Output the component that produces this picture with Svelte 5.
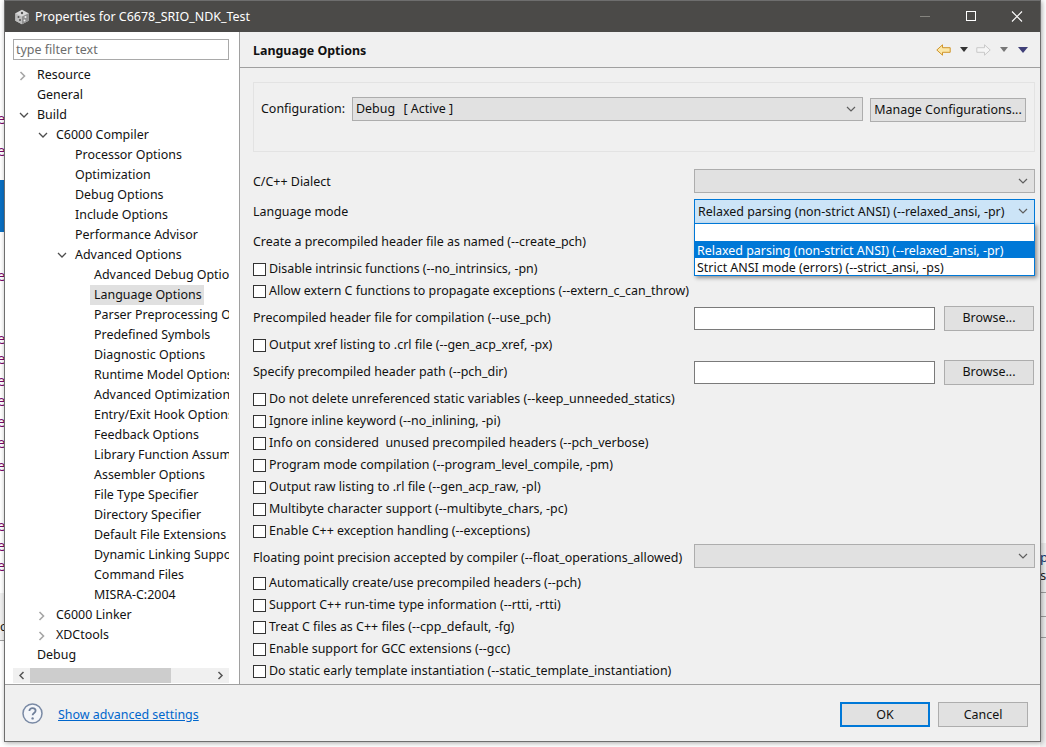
<script>
  const tree = [
    ['Resource', 0, 'r'], ['General', 0, ''], ['Build', 0, 'd'], ['C6000 Compiler', 1, 'd'],
    ['Processor Options', 2, ''], ['Optimization', 2, ''], ['Debug Options', 2, ''], ['Include Options', 2, ''],
    ['Performance Advisor', 2, ''], ['Advanced Options', 2, 'd'], ['Advanced Debug Options', 3, ''],
    ['Language Options', 3, '', true], ['Parser Preprocessing Options', 3, ''], ['Predefined Symbols', 3, ''],
    ['Diagnostic Options', 3, ''], ['Runtime Model Options', 3, ''], ['Advanced Optimizations', 3, ''],
    ['Entry/Exit Hook Options', 3, ''], ['Feedback Options', 3, ''], ['Library Function Assumptions', 3, ''],
    ['Assembler Options', 3, ''], ['File Type Specifier', 3, ''], ['Directory Specifier', 3, ''],
    ['Default File Extensions', 3, ''], ['Dynamic Linking Support', 3, ''], ['Command Files', 3, ''],
    ['MISRA-C:2004', 3, ''], ['C6000 Linker', 1, 'r'], ['XDCtools', 1, 'r'], ['Debug', 0, '']
  ];
  const leftMarks = [118, 150, 275, 338, 358, 380, 400, 421, 442, 465, 525, 545, 565];
  const group1 = ['Disable intrinsic functions (--no_intrinsics, -pn)', 'Allow extern C functions to propagate exceptions (--extern_c_can_throw)'];
  const group2 = [
    'Do not delete unreferenced static variables (--keep_unneeded_statics)',
    'Ignore inline keyword (--no_inlining, -pi)',
    'Info on considered  unused precompiled headers (--pch_verbose)',
    'Program mode compilation (--program_level_compile, -pm)',
    'Output raw listing to .rl file (--gen_acp_raw, -pl)',
    'Multibyte character support (--multibyte_chars, -pc)',
    'Enable C++ exception handling (--exceptions)'
  ];
  const group3 = [
    'Automatically create/use precompiled headers (--pch)',
    'Support C++ run-time type information (--rtti, -rtti)',
    'Treat C files as C++ files (--cpp_default, -fg)',
    'Enable support for GCC extensions (--gcc)',
    'Do static early template instantiation (--static_template_instantiation)'
  ];
</script>

{#snippet chevron()}
  <svg class="chev" width="10" height="6" viewBox="0 0 10 6"><path d="M1 1l4 4 4-4" fill="none" stroke="#5f5f5f" stroke-width="1.2"/></svg>
{/snippet}

{#snippet check(text)}
  <div class="check"><span class="box"></span><span class="ctext">{text}</span></div>
{/snippet}

<div class="desktop">
  <div class="bluebg"></div>
  {#each leftMarks as y}
    <span class="mark" style="top:{y - 11}px">e</span>
  {/each}
  <div class="rightbg">
    <span class="rc r1">p</span>
    <span class="rc r2">s</span>
    <i class="rl l1"></i><i class="rl l2"></i><i class="rl l3"></i>
  </div>
  <div class="leftpanel"><span>c</span></div>

  <div class="dialog">
    <header class="titlebar">
      <svg class="appicon" width="16" height="16" viewBox="0 0 16 16">
        <path d="M8 .8l6.6 3.4v7.6L8 15.2l-6.6-3.4V4.2z" fill="#d8d8d8"/>
        <path d="M8 7.6l6.6-3.4v7.6L8 15.2z" fill="#8f8f8f"/>
        <path d="M8 7.6L1.4 4.2v7.6L8 15.2z" fill="#bdbdbd"/>
        <circle cx="8" cy="4" r="1.2" fill="#555"/><circle cx="4.5" cy="8" r="1" fill="#555"/><circle cx="11.5" cy="8" r="1" fill="#eee"/><circle cx="6" cy="11" r="1" fill="#555"/><circle cx="10.5" cy="11.5" r="1" fill="#eee"/>
      </svg>
      <span class="title">Properties for C6678_SRIO_NDK_Test</span>
      <div class="winbtns">
        <svg width="46" height="31" viewBox="0 0 46 31"><path d="M18 15.5h10" stroke="#85847f" stroke-width="1"/></svg>
        <svg width="46" height="31" viewBox="0 0 46 31"><rect x="18.5" y="10.5" width="9" height="9" fill="none" stroke="#fff" stroke-width="1"/></svg>
        <svg width="46" height="31" viewBox="0 0 46 31"><path d="M18 10.5l10 10M28 10.5l-10 10" stroke="#fff" stroke-width="1.1"/></svg>
      </div>
    </header>

    <div class="body">
      <aside class="side">
        <div class="filter">type filter text</div>
        <div class="tree">
          {#each tree as [label, level, arrow, selected]}
            <div class="node" style="padding-left:{24 + level * 19}px">
              {#if arrow === 'r'}
                <svg class="tw" width="8" height="10" viewBox="0 0 8 10"><path d="M1.5 1l4 4-4 4" fill="none" stroke="#a6a6a6" stroke-width="1.6"/></svg>
              {:else if arrow === 'd'}
                <svg class="tw" width="10" height="8" viewBox="0 0 10 8"><path d="M1 2l4 4 4-4" fill="none" stroke="#4d4d4d" stroke-width="1.3"/></svg>
              {/if}
              <span class="label" class:selected>{label}</span>
            </div>
          {/each}
        </div>
        <div class="scroll">
          <svg width="17" height="15" viewBox="0 0 17 15"><path d="M10.5 4l-3.5 3.5 3.5 3.5" fill="none" stroke="#555" stroke-width="1.5"/></svg>
          <span class="thumb"></span>
          <svg class="sr" width="17" height="15" viewBox="0 0 17 15"><path d="M6.5 4l3.5 3.5-3.5 3.5" fill="none" stroke="#555" stroke-width="1.5"/></svg>
        </div>
      </aside>

      <main class="main">
        <div class="head">
          <h1>Language Options</h1>
          <div class="nav">
            <svg width="15" height="12" viewBox="0 0 15 12"><path d="M.8 6L6.5.8v2.9h7.7v4.6H6.5v2.9z" fill="#fbe7a8" stroke="#d0952a" stroke-width="1"/></svg>
            <svg class="tri" width="8" height="5" viewBox="0 0 8 5"><path d="M0 0h8L4 5z" fill="#333"/></svg>
            <svg class="fwd" width="15" height="12" viewBox="0 0 15 12"><path d="M14.2 6L8.5.8v2.9H.8v4.6h7.7v2.9z" fill="#f5f5f5" stroke="#c9c9c9" stroke-width="1"/></svg>
            <svg class="tri2" width="8" height="5" viewBox="0 0 8 5"><path d="M0 0h8L4 5z" fill="#777"/></svg>
            <svg class="menu" width="10" height="6" viewBox="0 0 10 6"><path d="M0 0h10L5 6z" fill="#3f3f78"/></svg>
          </div>
        </div>

        <div class="confbox">
          <span class="conflabel">Configuration:</span>
          <div class="combo conf"><span>Debug&nbsp;&nbsp;<span class="act">[ Active ]</span></span>{@render chevron()}</div>
          <button class="btn manage">Manage Configurations...</button>
        </div>

        <div class="form">
          <div class="row lift"><span class="rtext">C/C++ Dialect</span><div class="combo wide">{@render chevron()}</div></div>
          <div class="row lift overlay-host">
            <span class="rtext">Language mode</span>
            <div class="combo wide active"><span class="rtext">Relaxed parsing (non-strict ANSI) (--relaxed_ansi, -pr)</span>{@render chevron()}</div>
            <div class="popup">
              <div class="opt"></div>
              <div class="opt sel">Relaxed parsing (non-strict ANSI) (--relaxed_ansi, -pr)</div>
              <div class="opt">Strict ANSI mode (errors) (--strict_ansi, -ps)</div>
            </div>
          </div>
          <div class="row t1"><span class="rtext">Create a precompiled header file as named (--create_pch)</span></div>
          {#each group1 as c}{@render check(c)}{/each}
          <div class="row field"><span>Precompiled header file for compilation (--use_pch)</span><div class="fieldbox"><span class="input"></span><button class="btn browse">Browse...</button></div></div>
          {@render check('Output xref listing to .crl file (--gen_acp_xref, -px)')}
          <div class="row field"><span>Specify precompiled header path (--pch_dir)</span><div class="fieldbox"><span class="input"></span><button class="btn browse">Browse...</button></div></div>
          {#each group2 as c}{@render check(c)}{/each}
          <div class="row float"><span class="rtext">Floating point precision accepted by compiler (--float_operations_allowed)</span><div class="combo wide">{@render chevron()}</div></div>
          {#each group3 as c}{@render check(c)}{/each}
        </div>
      </main>
    </div>

    <footer class="foot">
      <svg class="help" width="21" height="21" viewBox="0 0 21 21">
        <circle cx="10.5" cy="10.5" r="9.5" fill="#f4f6fa" stroke="#7a8aa5" stroke-width="1.5"/>
        <path d="M7.4 8c0-1.9 1.4-2.9 3.1-2.9s3.1 1 3.1 2.6c0 2.3-3 2.3-3 4.6" fill="none" stroke="#6f7f9a" stroke-width="1.8"/>
        <circle cx="10.6" cy="15.4" r="1.2" fill="#6f7f9a"/>
      </svg>
      <a class="link" href="#top">Show advanced settings</a>
      <button class="btn ok">OK</button>
      <button class="btn cancel">Cancel</button>
    </footer>
  </div>
</div>

<style>
  :global(body) { margin: 0; background: #fff; }
  .desktop { position: relative; width: 1046px; height: 747px; overflow: hidden; background: #fff; font: 12.45px/18px "Noto Sans", sans-serif; color: #111; white-space: nowrap; }
  .ctext { white-space: pre; }
  .bluebg { position: absolute; left: 0; top: 180px; width: 6px; height: 52px; background: #0a6fc2; }
  .mark { position: absolute; left: -3px; color: #7a0a6a; font-size: 15px; line-height: 22px; }
  .rightbg { position: absolute; right: 0; top: 543px; width: 6px; height: 204px; background: #f0f0f0; }
  .rc { position: absolute; left: 0; font-size: 13px; line-height: 16px; }
  .r1 { top: 6px; color: #103a7a; }
  .r2 { top: 24px; color: #222; }
  .rl { position: absolute; left: 0; width: 6px; height: 1px; background: #a0a0a0; }
  .l1 { top: 49px; } .l2 { top: 73px; } .l3 { top: 94px; }
  .leftpanel { position: absolute; left: 0; top: 593px; width: 6px; height: 47px; background: #f0f0f0; border-bottom: 1px solid #a0a0a0; }
  .leftpanel span { position: absolute; left: 0; top: 25px; }

  .dialog { position: absolute; left: 5px; top: 1px; width: 1035px; height: 740px; background: #f0f0f0; display: flex; flex-direction: column; box-shadow: 0 0 0 1px #6e6e6e, 1px 1px 5px 1px rgba(0,0,0,.35); }
  .titlebar { height: 31px; flex: none; background: #4b4a48; color: #fff; display: flex; align-items: center; padding-left: 9px; }
  .appicon { flex: none; }
  .title { margin-left: 5px; }
  .winbtns { margin-left: auto; display: flex; }
  .winbtns svg { display: block; }

  .body { flex: 1; display: flex; min-height: 0; border-bottom: 1px solid #a0a0a0; }
  .side { flex: none; background: #fff; border-right: 1px solid #a0a0a0; padding: 7px 10px 0 8px; box-sizing: border-box; width: 235px; display: flex; flex-direction: column; }
  .filter { height: 21px; border: 1px solid #a9a9a9; box-sizing: border-box; color: #6d6d6d; padding-left: 2px; line-height: 19px; flex: none; width: 216px; }
  .tree { margin-top: 5px; flex: 1; overflow: hidden; width: 216px; }
  .node { position: relative; height: 20px; line-height: 20px; }
  .tw { position: absolute; margin-left: -18px; top: 6px; }
  .label { display: inline-block; padding: 0 2px 0 4px; margin-left: -4px; height: 20px; }
  .label.selected { background: #e0e0e0; }
  .scroll { height: 15px; flex: none; width: 216px; background: #f0f0f0; display: flex; margin-bottom: 1px; }
  .scroll svg { display: block; }
  .sr { margin-left: auto; }
  .thumb { width: 141px; height: 15px; background: #cdcdcd; }

  .main { flex: 1; padding-left: 13px; min-width: 0; }
  .head { height: 35px; margin-left: -13px; padding: 0 12px 0 13px; border-bottom: 1px solid #a0a0a0; display: flex; align-items: center; }
  .head h1 { margin: 0; padding-top: 2px; font-size: 12.45px; font-weight: 700; }
  .nav { margin-left: auto; display: flex; align-items: center; }
  .nav svg { display: block; }
  .tri { margin-left: 9px; }
  .fwd { margin-left: 8px; }
  .tri2 { margin-left: 9px; }
  .menu { margin-left: 10px; }

  .confbox { margin-top: 14px; width: 782px; height: 70px; box-sizing: border-box; border: 1px solid #e3e3e3; display: flex; align-items: flex-start; padding: 14px 8px 0 7px; }
  .conflabel { width: 91px; line-height: 24px; flex: none; }
  .combo { height: 24px; box-sizing: border-box; border: 1px solid #adadad; background: #e1e1e1; display: flex; align-items: center; padding: 0 6px 0 3px; }
  .conf { width: 511px; }
  .act { margin-left: 2px; }
  .chev { margin-left: auto; flex: none; }
  .btn { box-sizing: border-box; border: 1px solid #adadad; background: #e1e1e1; font: inherit; color: #111; padding: 0; white-space: nowrap; }
  .manage { margin-left: 7px; width: 156px; height: 24px; margin-top: 1px; }

  .form { margin-top: 14px; width: 782px; }
  .row { height: 30px; display: flex; align-items: center; justify-content: space-between; }
  .rtext { padding-top: 2px; }
  .row.t1 { margin-bottom: 2px; }
  .row.field { height: 32px; }
  .row.float .combo { margin-bottom: 2px; }
  .wide { width: 341px; }
  .active { border-color: #0078d7; background: #cce4f7; height: 25px; }
  .overlay-host { position: relative; }
  .popup { position: absolute; left: 441px; top: 27px; width: 341px; height: 53px; box-sizing: border-box; border: 1px solid #0078d7; background: #fff; box-shadow: 2px 2px 4px rgba(0,0,0,.4); z-index: 2; }
  .opt { height: 17px; line-height: 19px; padding-left: 2px; }
  .opt.sel { background: #0078d7; color: #fff; line-height: 19px; }
  .check { height: 22px; display: flex; align-items: center; }
  .box { width: 13px; height: 13px; box-sizing: border-box; border: 1px solid #333; background: #fff; flex: none; margin-right: 3px; }
  .fieldbox { display: flex; align-items: center; width: 340px; margin-right: 1px; }
  .input { width: 241px; height: 23px; box-sizing: border-box; border: 1px solid #7a7a7a; background: #fff; }
  .browse { width: 90px; height: 25px; margin-left: 9px; }

  .foot { height: 56px; flex: none; display: flex; align-items: flex-start; position: relative; }
  .help { margin: 18px 0 0 17px; flex: none; }
  .link { margin: 21px 0 0 15px; color: #0066cc; text-decoration: underline; }
  .ok { margin: 17px 0 0 auto; width: 90px; height: 25px; border: 2px solid #0078d7; }
  .cancel { margin: 17px 12px 0 8px; width: 90px; height: 25px; }
</style>
